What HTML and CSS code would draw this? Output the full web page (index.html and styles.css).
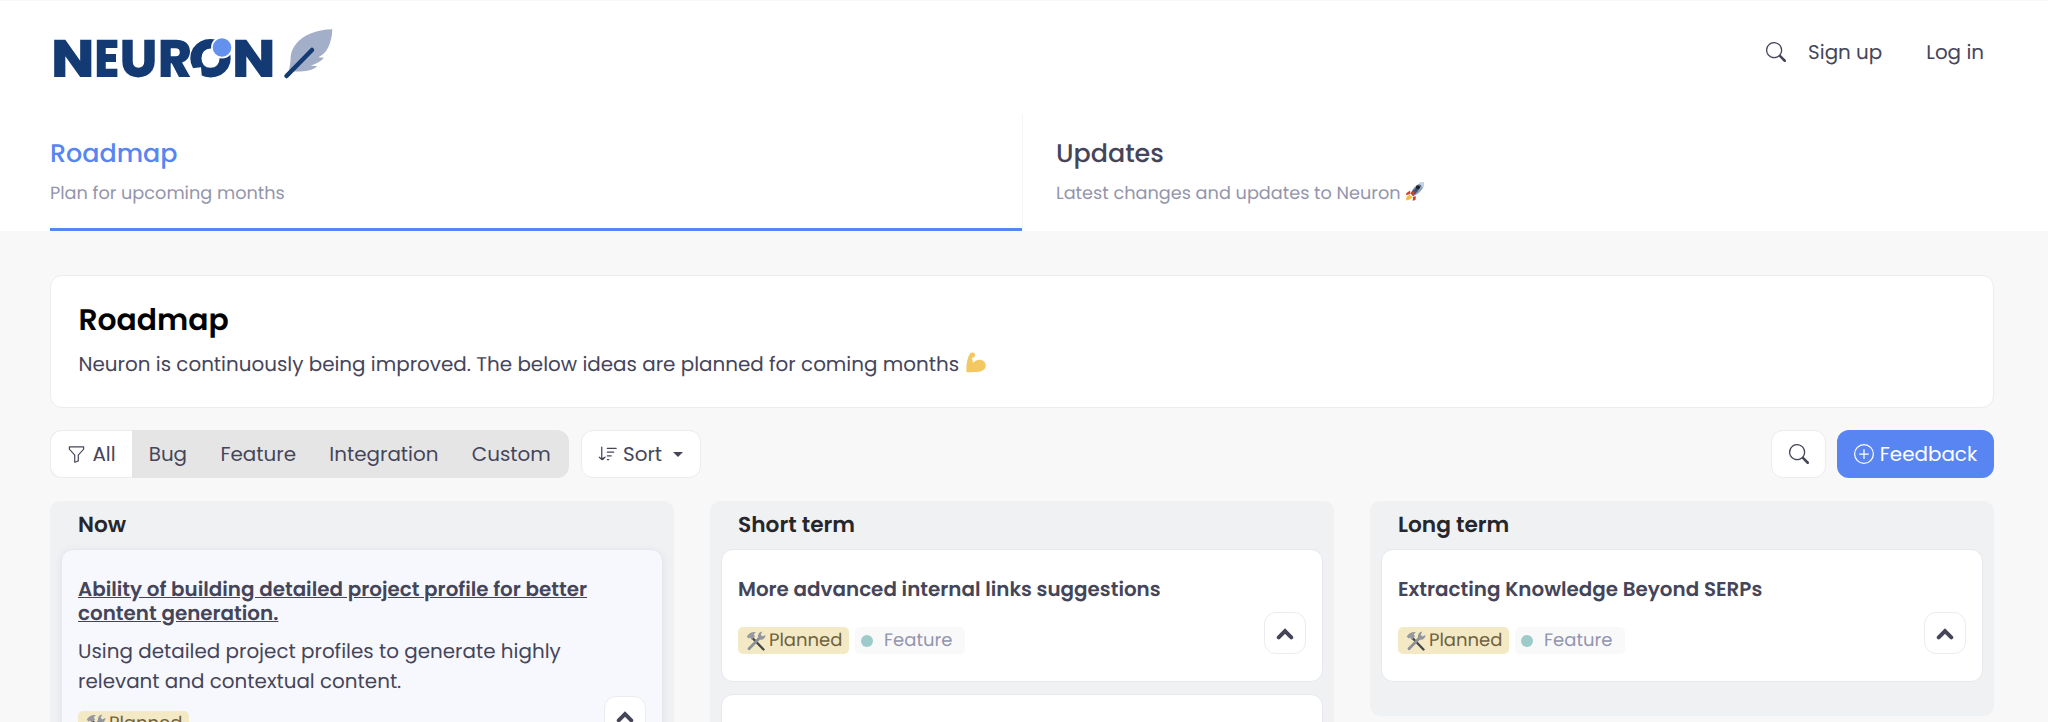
FILE: index.html
```
<!DOCTYPE html>
<html lang="en">
<head>
  <meta charset="UTF-8" />
  <meta name="viewport" content="width=device-width, initial-scale=1.0" />
  <title>Roadmap - Neuron</title>
  <link rel="stylesheet" href="styles.css">
</head>
<body>
  <!-- shared icons -->
  <svg class="sprite" width="0" height="0">
    <symbol id="i-search" viewBox="0 0 16 16"><path d="M11.742 10.344a6.5 6.5 0 1 0-1.397 1.398h-.001c.03.04.062.078.098.115l3.85 3.85a1 1 0 0 0 1.415-1.414l-3.85-3.85a1.007 1.007 0 0 0-.115-.1zM12 6.5a5.5 5.5 0 1 1-11 0 5.5 5.5 0 0 1 11 0z"/></symbol>
    <symbol id="i-up" viewBox="0 0 16 12"><path d="M2.2 9.6 8 3.8l5.8 5.8" fill="none" stroke="currentColor" stroke-width="3.6" stroke-linecap="round"/></symbol>
    <symbol id="i-tools" viewBox="0 0 20 20">
      <path d="M17.5 18.5 6 6.5" stroke="#45474d" stroke-width="2.4" stroke-linecap="round"/>
      <path d="M3 17.8 14.5 6" stroke="#8d9198" stroke-width="2.8" stroke-linecap="round"/>
      <path d="M.8 5.500C2.500 2.500 5.500.6 9.800 1.100L7.800 3.500l1.200 2L5.500 8.800 4 6.500 2.400 7.500z" fill="#96999f"/>
      <path d="M12 4.500c.4-2 2-3.700 4.200-3.900l-1.500 3.200 1.500 1.600 3.200-1.400c.2 2.500-1.800 4.800-4.700 4.800L11.800 7z" fill="#92959b"/>
    </symbol>
  </svg>

  <header>
    <div class="topbar">
      <a class="logo" href="#">
        <svg width="284" height="56" viewBox="0 0 284 56">
          <text class="logo-text" x="-3" y="50.5" textLength="43.5" lengthAdjust="spacingAndGlyphs">N</text>
          <text class="logo-text" x="40.3" y="50.5" textLength="25" lengthAdjust="spacingAndGlyphs">E</text>
          <text class="logo-text" x="65.5" y="50.5" textLength="38" lengthAdjust="spacingAndGlyphs">U</text>
          <text class="logo-text" x="134.5" y="50.5" textLength="44" lengthAdjust="spacingAndGlyphs">O</text>
          <path d="M136 42.500 147 41.300l1 11h-12z" fill="#fff"/>
          <circle cx="168" cy="21.500" r="11" fill="#fff"/>
          <circle cx="168" cy="21.500" r="9.300" fill="#6591ee"/>
          <text class="logo-text" x="103.7" y="50.5" textLength="34" lengthAdjust="spacingAndGlyphs">R</text>
          <text class="logo-text" x="178" y="50.5" textLength="43.5" lengthAdjust="spacingAndGlyphs">N</text>
          <path d="M278.300 3.200C262 3.500 249 9 242 18c-5 6.500-5.500 11-5.500 17l-1.500 10c7 1 14 .5 19.300-.5 4-1 7-2.500 9-4.300l-6.600-.7c5-1.500 10-3.500 13.300-7.700l-5.700-.5c4-2 7.500-5 10-10 2.500-5.500 4-12 4-18.100z" fill="#a3afc8"/>
          <path d="M232.500 50 258 24" stroke="#133a73" stroke-width="4.500" stroke-linecap="round"/>
        </svg>
      </a>
      <nav class="user-nav">
        <svg class="icon"><use href="#i-search"/></svg>
        <a class="signup" href="#">Sign up</a>
        <a class="login" href="#">Log in</a>
      </nav>
    </div>
    <div class="tabs">
      <a class="tab active" href="#">
        <h3>Roadmap</h3>
        <p>Plan for upcoming months</p>
      </a>
      <a class="tab" href="#">
        <h3>Updates</h3>
        <p>Latest changes and updates to Neuron <svg class="emoji rocket" viewBox="0 0 20 20">
          <path d="M5 9 1 11.500 0.500 14 5 12.500zM11 15l-.5 4-3 .8L8 15.500z" fill="#d5402b"/>
          <path d="M5.500 12C8 5.500 13 .8 19.500.5 19.500 7 15 12 8 14.800z" fill="#8fa3bd"/>
          <path d="M5.500 12C8 7.500 12 5 17 3 14 8 11.500 12 8 14.800z" fill="#3c5676"/>
          <path d="M14 .8c2-.5 4-.5 5.500-.3.200 2 0 4-.8 6z" fill="#c3d3e0"/>
          <circle cx="13" cy="5.500" r="2.100" fill="#20232b"/>
          <path d="M5 11.500 10 9.500 8.500 15z" fill="#d5402b"/>
          <path d="M4.500 13.500 1 15.500.5 19.500l4-1 3-2.500z" fill="#f6bd3e"/>
        </svg></p>
      </a>
    </div>
  </header>

  <main>
    <section class="intro">
      <h1>Roadmap</h1>
      <p>Neuron is continuously being improved. The below ideas are planned for coming months <svg class="emoji arm" viewBox="0 0 20 21"><path d="M4 1.500C5 0 8 .2 8.800 1.800c.7 1.500.2 3.500-1.600 4l-1.400-.2c.4 2 1 3.500 1.500 5.400C9 8 14 6.500 17.500 9c3 2.500 3 6.500.5 8.500-3 2.500-7 2.500-10 2.500-2.500 0-5 .5-7.500.2C0 14 1 6 4 1.500z" fill="#f4c860"/></svg></p>
    </section>

    <div class="toolbar">
      <div class="filters">
        <button class="selected"><svg class="icon-filter" viewBox="0 0 16 16"><path d="M1.500 1.500A.5.5 0 0 1 2 1h12a.5.5 0 0 1 .5.5v2a.5.5 0 0 1-.128.334L10 8.692V13.500a.5.5 0 0 1-.342.474l-3 1A.5.5 0 0 1 6 14.500V8.692L1.628 3.834A.5.5 0 0 1 1.500 3.500v-2zm1 .5v1.308l4.372 4.858A.5.5 0 0 1 7 8.500v5.306l2-.666V8.500a.5.5 0 0 1 .128-.334L13.500 3.308V2h-11z"/></svg><span>All</span></button>
        <button>Bug</button>
        <button>Feature</button>
        <button>Integration</button>
        <button>Custom</button>
      </div>
      <button class="sort"><svg class="icon-sort" viewBox="0 0 16 16"><path d="M3.500 2.500a.5.5 0 0 0-1 0v8.793l-1.146-1.147a.5.5 0 0 0-.708.708l2 1.999.7.007a.497.497 0 0 0 .7-.006l2-2a.5.5 0 0 0-.707-.708L3.500 11.293V2.500zm3.500 1a.5.5 0 0 1 .5-.5h7a.5.5 0 0 1 0 1h-7a.5.5 0 0 1-.5-.5zM7.500 6a.5.5 0 0 0 0 1h5a.5.5 0 0 0 0-1h-5zm0 3a.5.5 0 0 0 0 1h3a.5.5 0 0 0 0-1h-3zm0 3a.5.5 0 0 0 0 1h1a.5.5 0 0 0 0-1h-1z"/></svg><span>Sort</span><i class="caret"></i></button>
      <button class="search"><svg class="icon"><use href="#i-search"/></svg></button>
      <button class="feedback"><svg class="icon-plus" viewBox="0 0 16 16"><path d="M8 15A7 7 0 1 1 8 1a7 7 0 0 1 0 14zm0 1A8 8 0 1 0 8 0a8 8 0 0 0 0 16z"/><path d="M8 4a.5.5 0 0 1 .5.5v3h3a.5.5 0 0 1 0 1h-3v3a.5.5 0 0 1-1 0v-3h-3a.5.5 0 0 1 0-1h3v-3A.5.5 0 0 1 8 4z"/></svg><span>Feedback</span></button>
    </div>

    <div class="board">
      <section class="column">
        <h2>Now</h2>
        <article class="card hovered">
          <div class="card-body">
            <h4>Ability of building detailed project profile for better content generation.</h4>
            <p>Using detailed project profiles to generate highly relevant and contextual content.</p>
            <div class="tags">
              <span class="tag planned"><svg class="tools"><use href="#i-tools"/></svg>Planned</span>
            </div>
          </div>
          <button class="vote"><svg><use href="#i-up"/></svg></button>
        </article>
      </section>

      <section class="column">
        <h2>Short term</h2>
        <article class="card">
          <div class="card-body">
            <h4>More advanced internal links suggestions</h4>
            <div class="tags">
              <span class="tag planned"><svg class="tools"><use href="#i-tools"/></svg>Planned</span>
              <span class="tag feature">Feature</span>
            </div>
          </div>
          <button class="vote"><svg><use href="#i-up"/></svg></button>
        </article>
        <article class="card empty"></article>
      </section>

      <section class="column">
        <h2>Long term</h2>
        <article class="card">
          <div class="card-body">
            <h4>Extracting Knowledge Beyond SERPs</h4>
            <div class="tags">
              <span class="tag planned"><svg class="tools"><use href="#i-tools"/></svg>Planned</span>
              <span class="tag feature">Feature</span>
            </div>
          </div>
          <button class="vote"><svg><use href="#i-up"/></svg></button>
        </article>
      </section>
    </div>
  </main>
</body>
</html>
```
FILE: styles.css
```
:root {
  --bg-color: #f8f8f8;
  --text-color: #45455a;
  --muted-color: #9395ad;
  --border-color: #ececef;
  --primary-color: #5885f2;
}
* {
  margin: 0;
  padding: 0;
  box-sizing: border-box;
}
html {
  height: 100%;
  overflow: hidden;
}
body {
  height: 100%;
  overflow: hidden;
  background: var(--bg-color);
  color: var(--text-color);
  font-family: Poppins, Inter, sans-serif;
  font-size: 19.9px;
  line-height: 30px;
  text-rendering: geometricPrecision;
}
a {
  color: inherit;
  text-decoration: none;
}
button {
  font: inherit;
  color: inherit;
  border: none;
  background: none;
  cursor: pointer;
}
svg {
  fill: currentColor;
  flex: none;
}
.sprite {
  display: block;
}
.icon {
  width: 20px;
  height: 20px;
}

/* header */
header {
  height: 231px;
  padding: 0 54px 0 50px;
  background: #fff;
  border-top: 1px solid #f8f8f8;
}
.topbar {
  height: 105px;
  display: flex;
  justify-content: space-between;
  align-items: center;
}
.logo {
  margin-left: 4px;
  height: 56px;
}
.logo svg {
  display: block;
  overflow: visible;
}
.logo-text {
  font-weight: 800;
  font-size: 53px;
  fill: #133a73;
}
.user-nav {
  display: flex;
  align-items: center;
  margin-right: 10px;
  margin-bottom: 3px;
}
.signup {
  margin-left: 22px;
  margin-right: 44px;
}
.tabs {
  display: grid;
  grid-template-columns: 1fr 1fr;
  margin-top: 8px;
}
.tab {
  height: 117px;
  padding: 24px 33px 0;
  border-bottom: 3px solid transparent;
}
.tab.active {
  padding-left: 0;
  border-bottom-color: var(--primary-color);
}
.tab + .tab {
  border-left: 1px solid #f5f5f7;
}
.tab h3 {
  font-size: 25.4px;
  font-weight: 500;
  margin-bottom: 12px;
}
.tab.active h3 {
  color: var(--primary-color);
}
.tab p {
  font-size: 17.7px;
  line-height: 28px;
  color: var(--muted-color);
}
.emoji {
  vertical-align: -2px;
}
.rocket {
  width: 20px;
  height: 19px;
}
.arm {
  width: 20px;
  height: 21px;
  margin-left: 2px;
}

main {
  padding: 44px 54px 0 50px;
}
.intro {
  height: 133px;
  padding: 27px 27.5px;
  background: #fff;
  border: 1px solid var(--border-color);
  border-radius: 12px;
}
.intro h1 {
  font-size: 29.8px;
  line-height: 36px;
  font-weight: 600;
  color: #000;
  margin-bottom: 10px;
}

/* toolbar */
.toolbar {
  display: flex;
  height: 48px;
  margin-top: 22px;
}
.filters {
  display: flex;
  width: 519px;
  background: #e5e5e5;
  border-radius: 12px;
  overflow: hidden;
}
.filters button {
  padding-left: 16.7px;
  padding-right: 16.7px;
}
.filters .selected {
  flex: none;
  width: 82px;
  padding: 0;
  display: flex;
  align-items: center;
  justify-content: center;
  gap: 6px;
  background: #fff;
  border: 1px solid var(--border-color);
  border-right: none;
  border-radius: 12px 0 0 12px;
}
.icon-filter {
  width: 19px;
  height: 19px;
}
.sort {
  display: flex;
  align-items: center;
  width: 120px;
  margin-left: 12px;
  padding-left: 16px;
  background: #fff;
  border: 1px solid var(--border-color);
  border-radius: 12px;
}
.icon-sort {
  width: 20px;
  height: 20px;
  margin-right: 5px;
}
.caret {
  margin-left: 11px;
  border: 5px solid transparent;
  border-top-color: currentColor;
  border-bottom: none;
}
.search {
  display: flex;
  align-items: center;
  justify-content: center;
  width: 55px;
  margin-left: auto;
  background: #fff;
  border: 1px solid var(--border-color);
  border-radius: 12px;
}
.feedback {
  display: flex;
  align-items: center;
  justify-content: center;
  gap: 6px;
  width: 157px;
  margin-left: 11px;
  background: var(--primary-color);
  border-radius: 12px;
  color: #fff;
}
.icon-plus {
  width: 20px;
  height: 20px;
}

/* board */
.board {
  display: grid;
  grid-template-columns: repeat(3, 1fr);
  gap: 36px;
  align-items: start;
  margin-top: 23px;
}
.column {
  padding: 8px 11px 22px;
  background: #f0f1f3;
  border-radius: 10px;
}
.column h2 {
  padding-left: 17px;
  font-size: 21.7px;
  line-height: 32px;
  font-weight: 600;
  color: #26272c;
  margin-bottom: 8px;
}
.card {
  display: flex;
  align-items: flex-end;
  padding: 28px 16px 27px;
  background: #fff;
  border: 1px solid #e6e8ee;
  border-radius: 12px;
  margin-bottom: 12px;
}
.card.hovered {
  background: #f7f8fe;
  box-shadow: 0 2px 8px rgba(80, 100, 160, 0.1);
}
.card.empty {
  height: 133px;
}
.card-body {
  flex: 1;
  display: flex;
  flex-direction: column;
}
.card h4 {
  font-size: 19.9px;
  line-height: 23.5px;
  font-weight: 600;
  margin-bottom: 12px;
}
.card.hovered h4 {
  text-decoration: underline;
}
.card p {
  line-height: 29.5px;
  margin-bottom: 1px;
}
.tags {
  display: flex;
  gap: 6px;
  margin-top: 13.5px;
}
.tag {
  height: 27px;
  line-height: 26px;
  font-size: 18px;
  border-radius: 5px;
}
.planned {
  display: flex;
  align-items: center;
  gap: 3px;
  width: 111px;
  padding-left: 8px;
  background: #f4e9c5;
  color: #6e6240;
}
.tools {
  width: 20px;
  height: 20px;
}
.feature {
  display: flex;
  align-items: center;
  width: 110px;
  padding-left: 6px;
  background: #f9f9fa;
  color: var(--muted-color);
}
.feature::before {
  content: "";
  width: 12px;
  height: 12px;
  margin-right: 11px;
  border-radius: 50%;
  background: #9dcbca;
}
.vote {
  display: flex;
  align-items: center;
  justify-content: center;
  width: 42px;
  height: 42px;
  background: #fff;
  border: 1px solid var(--border-color);
  border-radius: 12px;
}
.vote svg {
  width: 18px;
  height: 13px;
}
```
